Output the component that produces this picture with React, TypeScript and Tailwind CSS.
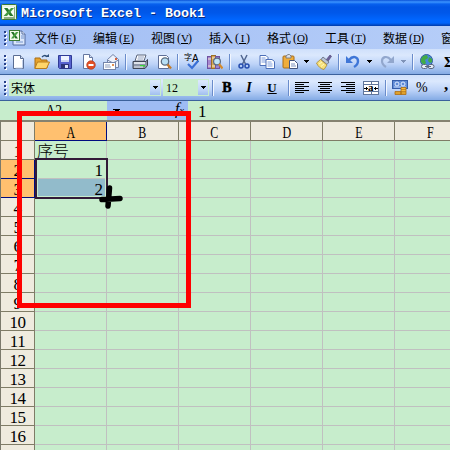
import type { ReactNode } from 'react';

const SONG = "font-['Noto_Sans_CJK_SC',sans-serif]";
const SERIF = "font-['Liberation_Serif','Noto_Sans_CJK_SC',serif]";

const MENUS = [
  { label: '文件', hotkey: 'F' },
  { label: '编辑', hotkey: 'E' },
  { label: '视图', hotkey: 'V' },
  { label: '插入', hotkey: 'I' },
  { label: '格式', hotkey: 'O' },
  { label: '工具', hotkey: 'T' },
  { label: '数据', hotkey: 'D' },
  { label: '窗', hotkey: '' },
];

const COLUMNS = ['A', 'B', 'C', 'D', 'E', 'F'];
const ROWS = Array.from({ length: 16 }, (_, i) => i + 1);

const CELLS: Record<string, string> = { A1: '序号', A2: '1', A3: '2' };

function Icon({ className = '', children }: { className?: string; children: ReactNode }) {
  return (
    <svg viewBox="0 0 16 16" className={`h-4 w-4 shrink-0 ${className}`} fill="none">
      {children}
    </svg>
  );
}

function Grip() {
  return (
    <div className="flex shrink-0 flex-col gap-[2px]">
      {[0, 1, 2, 3].map((n) => (
        <div key={n} className="h-[2px] w-[2px] bg-[#27418a] shadow-[1px_1px_0_#fff]" />
      ))}
    </div>
  );
}

function Separator({ className }: { className: string }) {
  return <div className={`h-4 w-[2px] shrink-0 border-r border-l border-r-[#f1f6ff] border-l-[#6a8ccb] ${className}`} />;
}

function Arrow({ className = '', color = '#000' }: { className?: string; color?: string }) {
  return (
    <svg viewBox="0 0 5 3" className={`h-[3px] w-[5px] shrink-0 ${className}`} shapeRendering="crispEdges">
      <path d="M0 0h5v1h-1v1h-1v1h-1v-1h-1v-1h-1z" fill={color} />
    </svg>
  );
}

function ExcelLogo() {
  return (
    <svg viewBox="0 0 16 16" className="h-4 w-4 shrink-0">
      <rect x="0.5" y="0.5" width="15" height="15" rx="1" fill="#e9f3df" stroke="#3c7a34" />
      <path d="M13 3v11H3" stroke="#8cae82" strokeWidth="2" fill="none" />
      <rect x="2" y="3" width="11" height="9.500" fill="#f8fff4" />
      <path d="M3 4h3.500l6 8H9z" fill="#2b7a2c" />
      <path d="M10 4h3l-7 8H2.500z" fill="#459b41" />
    </svg>
  );
}

function TitleBar() {
  return (
    <div className="flex h-[26px] shrink-0 items-center bg-[linear-gradient(#0a52d8_0px,#3b94ff_2px,#0861ee_4px,#0055e5_7px,#0058ea_13px,#0066ff_20px,#0064fb_23px,#0048c4_25px,#003aa8_26px)] pl-px">
      <div className="pb-[2px]">
        <ExcelLogo />
      </div>
      <span className="ml-[4px] pt-[2px] font-['Liberation_Mono',monospace] text-[13.33px] leading-[24px] font-bold whitespace-pre text-white [text-shadow:1px_1px_0_#0b2c80]">
        Microsoft Excel - Book1
      </span>
    </div>
  );
}

function MenuBar() {
  return (
    <div className="flex h-[23px] shrink-0 items-center bg-linear-to-r from-[#a2bef4] to-[#b5cdf8] pl-1">
      <Grip />
      <svg viewBox="0 0 18 17" className="ml-[2px] h-[17px] w-[18px] shrink-0">
        <path d="M5 2h9l3 3v11H5z" fill="#dbe7fb" stroke="#526a9e" />
        <path d="M14 2v3h3" fill="#fff" stroke="#526a9e" />
        <rect x="1.500" y="1.500" width="10" height="10" fill="#f2fbea" stroke="#3c7a34" />
        <path d="M3 3h2.500l4.500 6.500H7.500z" fill="#226f24" />
        <path d="M8 3h2.500l-5 6.500H3z" fill="#49a044" />
        <path d="M13 7h3M13 9h3M8 13h7" stroke="#7795cc" />
      </svg>
      <div className="ml-[9px] flex">
        {MENUS.map((menu) => (
          <div key={menu.label} className="flex w-[58px] shrink-0 items-center text-black">
            <span className={`${SONG} text-[12px] leading-[16px]`}>{menu.label}</span>
            {menu.hotkey && (
              <span className={`${SERIF} ml-[2px] flex text-[12px] leading-[16px]`}>
                <span className="w-[4px]">(</span>
                <span className="mt-[2px] h-[12px] w-[7px] border-b border-black text-center leading-[12px]">
                  <span className="inline-block text-[11px]">{menu.hotkey}</span>
                </span>
                <span>)</span>
              </span>
            )}
          </div>
        ))}
      </div>
    </div>
  );
}

function StandardToolbar() {
  return (
    <div className="flex h-[26px] shrink-0 items-center border-b border-[#3b619c] bg-[linear-gradient(#cfe0fb,#dbe8fd_25%,#bdd3f8_60%,#84abe5)] pl-1">
      <Grip />
      {/* Nuevo */}
      <Icon className="ml-1">
        <path d="M3.500 1.500h7l3 3v10h-10z" fill="#fff" stroke="#5a6d93" />
        <path d="M10.500 1.500v3h3" fill="#d5e0f4" stroke="#5a6d93" />
        <path d="M12.500 6v8h-7" stroke="#c4d2ec" />
      </Icon>
      {/* Abrir */}
      <Icon className="ml-2">
        <path d="M1 4h5l1 2h6v8H1z" fill="#e8a42c" stroke="#a86c14" />
        <path d="M3.500 8h12l-3 6.500H.8z" fill="#ffd569" stroke="#b87c1d" />
        <path d="M8 3c2-2 4-2 5 0" stroke="#30517c" strokeWidth="1.300" />
        <path d="M11 3h4v-3z" fill="#30517c" />
      </Icon>
      {/* Guardar */}
      <Icon className="ml-[7px]">
        <path d="M1.500 1.500h13v13h-12l-1-1z" fill="#5863cf" stroke="#303b96" />
        <rect x="4" y="2" width="8" height="6" fill="#eef3ff" />
        <path d="M4 7h8" stroke="#a6b6e6" />
        <rect x="4" y="10" width="8" height="4.500" fill="#2c3478" />
        <rect x="8" y="11" width="3" height="3" fill="#dfe6fb" />
      </Icon>
      {/* Permisos */}
      <Icon className="ml-[7px]">
        <path d="M3.500 .5h6l3 3v11h-9z" fill="#fff" stroke="#6577a0" />
        <path d="M9.500 .5v3h3" fill="#d5e0f4" stroke="#6577a0" />
        <circle cx="11" cy="11" r="4.300" fill="#e14f25" stroke="#a92c10" strokeWidth=".6" />
        <rect x="8.500" y="10" width="5" height="2" fill="#fff" />
      </Icon>
      {/* Correo */}
      <Icon className="ml-[7px]">
        <path d="M4.500 5.500l5.500-5 5.500 5v8h-11z" fill="#eef2fb" stroke="#7484aa" />
        <path d="M4.500 6l5.500 3 5.500-3" stroke="#7484aa" />
        <rect x="12" y="4" width="2" height="2" fill="#d36242" />
        <rect x=".5" y="8.500" width="12" height="7" fill="#fff" stroke="#7484aa" />
        <path d="M2 11h5M2 13h6" stroke="#8b9abb" />
        <rect x="9" y="10" width="2" height="2" fill="#e39154" />
      </Icon>
      <Separator className="ml-[6px]" />
      {/* Imprimir */}
      <Icon className="ml-[5px]">
        <path d="M5 1h9l-2 6H3z" fill="#fff" stroke="#59647c" />
        <path d="M6 3h6M5.500 5h6" stroke="#93a3c2" />
        <path d="M1 7.500h13l1.500-2v6l-2.500 3H1z" fill="#8d96a8" stroke="#3f4656" />
        <rect x="2" y="8" width="11" height="2" fill="#dde2ea" />
        <rect x="8" y="11" width="5" height="1.600" fill="#38d13c" />
        <path d="M2 13h9" stroke="#e9edf4" />
      </Icon>
      {/* Vista previa */}
      <Icon className="ml-2">
        <path d="M2.500 1.500h8l2 2v11h-10z" fill="#fff" stroke="#5f7098" />
        <circle cx="9" cy="7.500" r="3.700" fill="#b8e0f5" stroke="#5d6d80" strokeWidth="1.300" />
        <path d="M11.500 10.500l3.500 4" stroke="#c47c28" strokeWidth="2.400" />
      </Icon>
      <Separator className="ml-[5px]" />
      {/* Ortografía */}
      <div className="relative ml-[5px] h-4 w-4 shrink-0">
        <span className={`${SONG} absolute -top-[3px] left-0 text-[8px] leading-[11px] text-black`}>字</span>
        <span className="absolute -top-[1px] left-[8px] font-['Liberation_Sans',sans-serif] text-[10px] leading-[11px] text-black">A</span>
        <svg viewBox="0 0 16 16" className="absolute inset-0 h-4 w-4" fill="none">
          <path d="M4 10l4 4 6-7" stroke="#3a6fd6" strokeWidth="2.200" />
        </svg>
      </div>
      {/* Referencia */}
      <Icon className="ml-[7px]">
        <rect x=".5" y="2.500" width="4" height="12" fill="#a887cf" stroke="#7052a0" />
        <rect x="4.500" y="1.500" width="4" height="13" fill="#d7a855" stroke="#9b6e28" />
        <path d="M1 5h3M1 12h3M5 4h3M5 12h3" stroke="#f5eaca" />
        <rect x="8.500" y="2.500" width="4" height="12" fill="#9d86cd" stroke="#7052a0" />
        <circle cx="10" cy="7.500" r="3.400" fill="#c0e5f7" stroke="#596b83" strokeWidth="1.200" />
        <path d="M12 10l3.500 4.500" stroke="#d58a2b" strokeWidth="2.200" />
      </Icon>
      <Separator className="ml-[6px]" />
      {/* Cortar */}
      <Icon className="ml-[5px]">
        <path d="M5 1l4.500 9M11 1l-4.500 9" stroke="#526790" strokeWidth="1.500" />
        <circle cx="5" cy="12" r="2" stroke="#254cae" strokeWidth="1.500" />
        <circle cx="11" cy="12" r="2" stroke="#254cae" strokeWidth="1.500" />
      </Icon>
      {/* Copiar */}
      <Icon className="ml-[7px]">
        <path d="M1 1.500h6l2 2v8H1z" fill="#fff" stroke="#4c6fb8" />
        <path d="M2.500 4h4M2.500 6h5M2.500 8h5" stroke="#7c9ddd" />
        <path d="M7 5.500h6l2.500 2v7H7z" fill="#fff" stroke="#4c6fb8" />
        <path d="M8.500 8h4M8.500 10h5M8.500 12h5" stroke="#7c9ddd" />
      </Icon>
      {/* Pegar */}
      <Icon className="ml-[7px]">
        <rect x="1" y="2" width="11" height="12" rx="1" fill="#efad3c" stroke="#a86d19" />
        <path d="M4 4V2l2-1.500h1.500L9 2v2z" fill="#dbe0e8" stroke="#6b6f78" strokeWidth=".8" />
        <path d="M7.500 6.500h5l3 3v5h-8z" fill="#fff" stroke="#44557e" />
        <path d="M9 10h4M9 12h5" stroke="#7c91bd" />
      </Icon>
      <Arrow className="ml-[6px]" />
      {/* Copiar formato */}
      <Icon className="ml-[7px]">
        <path d="M10 6l4-5 1.500 1.300-3.500 5z" fill="#6e6298" stroke="#544a7c" strokeWidth=".7" />
        <path d="M7 3l6 5-2 2.500-6-5z" fill="#b9c4d5" stroke="#5e6679" strokeWidth=".8" />
        <path d="M4.500 5.500l6.500 5.500-3 4.500C5 15 2 12.500.5 9z" fill="#f6e07a" stroke="#a8862e" strokeWidth=".8" />
        <path d="M3 10l3-2M5 12.500L8 10" stroke="#fff6c0" />
      </Icon>
      <Separator className="ml-[6px]" />
      {/* Deshacer */}
      <Icon className="ml-[5px]">
        <path d="M4 6c4-5 9-3 9 1 0 3-1.500 4.500-4 6" stroke="#3f76d7" strokeWidth="2.400" />
        <path d="M1 2v7h7z" fill="#3f76d7" />
      </Icon>
      <Arrow className="ml-[6px]" />
      {/* Rehacer */}
      <Icon className="ml-[7px]">
        <path d="M12 6c-4-5-9-3-9 1 0 3 1.500 4.500 4 6" stroke="#92a7cd" strokeWidth="2.200" />
        <path d="M15 2v7H8z" fill="#92a7cd" />
      </Icon>
      <Arrow className="ml-[6px]" color="#7f93b8" />
      <Separator className="ml-[6px]" />
      {/* Hipervínculo */}
      <Icon className="ml-[5px]">
        <circle cx="7.500" cy="6.500" r="6" fill="#4589dc" stroke="#315c9e" />
        <path d="M4 2l4-1 1 3-3 2 1 3-2 2-3-3V5zM10 3l3 2v3l-2 1-2-2z" fill="#42ab45" />
        <rect x="2.500" y="10.500" width="6" height="4" rx="2" fill="#e5edf8" stroke="#5b6780" />
        <rect x="9" y="10.500" width="6" height="4" rx="2" fill="#e5edf8" stroke="#5b6780" />
        <path d="M6 12.500h6" stroke="#5b6780" />
      </Icon>
      <span className={`${SERIF} ml-[9px] text-[15px] leading-4 font-bold text-black`}>Σ</span>
    </div>
  );
}

function AlignIcon({ className, d }: { className: string; d: string }) {
  return (
    <svg viewBox="0 0 14 12" className={`h-[12px] w-[14px] shrink-0 ${className}`} shapeRendering="crispEdges">
      <path d={d} stroke="#000" fill="none" />
    </svg>
  );
}

function FormatToolbar() {
  return (
    <div className="flex h-[26px] shrink-0 items-center border-b border-[#3b619c] bg-[linear-gradient(#cfe0fb,#dbe8fd_25%,#bdd3f8_60%,#84abe5)] pl-1">
      <Grip />
      <div className="ml-[3px] flex h-[17px] w-[140px] shrink-0 items-center bg-[#c7edcc] pl-[2px]">
        <span className={`${SONG} text-[12px] leading-[16px] text-black`}>宋体</span>
      </div>
      <div className="flex h-[17px] w-[12px] shrink-0 items-center justify-center border border-[#c7edcc]">
        <Arrow />
      </div>
      <div className="ml-[2px] flex h-[17px] w-[34px] shrink-0 items-center bg-[#c7edcc] pl-[3px]">
        <span className={`${SERIF} text-[12px] leading-[16px] text-black`}>12</span>
      </div>
      <div className="flex h-[17px] w-[12px] shrink-0 items-center justify-center border border-[#c7edcc]">
        <Arrow />
      </div>
      <Separator className="ml-[3px]" />
      <span className={`${SERIF} ml-[8px] w-[10px] shrink-0 text-center text-[14px] leading-4 font-black text-black [-webkit-text-stroke:0.5px_#000]`}>B</span>
      <span className={`${SERIF} ml-[12px] w-[10px] shrink-0 text-center text-[14px] leading-4 font-bold text-black italic`}>I</span>
      <span className={`${SERIF} ml-[13px] w-[10px] shrink-0 text-center text-[13px] leading-4 font-bold text-black underline`}>U</span>
      <Separator className="ml-[11px]" />
      <AlignIcon className="ml-[5px]" d="M0 .5h14M0 2.500h9M0 4.500h14M0 6.500h9M0 8.500h14M0 10.500h9" />
      <AlignIcon className="ml-[9px]" d="M0 .5h14M2 2.500h10M0 4.500h14M2 6.500h10M0 8.500h14M2 10.500h10" />
      <AlignIcon className="ml-[9px]" d="M0 .5h14M5 2.500h9M0 4.500h14M5 6.500h9M0 8.500h14M5 10.500h9" />
      {/* Combinar y centrar */}
      <div className="relative ml-[8px] h-4 w-4 shrink-0">
        <svg viewBox="0 0 16 16" className="h-4 w-4" shapeRendering="crispEdges" fill="none">
          <rect x=".5" y="1.500" width="15" height="13" fill="#fff" stroke="#60769b" />
          <path d="M0 4.500h16M0 11.500h16M8.500 1v4M8.500 11v4" stroke="#60769b" />
          <path d="M1 8.500h4M11 8.500h4M3.500 7v3M12.500 7v3" stroke="#000" />
        </svg>
        <span className={`${SERIF} absolute top-[1px] left-[5px] text-[11px] leading-[12px] font-bold text-black`}>a</span>
      </div>
      <Separator className="ml-[6px]" />
      {/* Moneda */}
      <Icon className="ml-[5px]">
        <rect x=".5" y=".5" width="15" height="8" fill="#5f8ad6" stroke="#355ca9" />
        <circle cx="5" cy="4" r="2" stroke="#e0ebff" />
        <circle cx="11" cy="4" r="2" stroke="#e0ebff" />
        <path d="M2 7h12" stroke="#c5d7f8" />
        <path d="M9 7.500h5v7H9zM3 11.500h6v3H3z" fill="#f5b839" stroke="#a96b13" strokeWidth=".8" />
        <path d="M9 9.500h5M9 11.500h5M9 13h5M3 13h6" stroke="#a96b13" strokeWidth=".6" />
      </Icon>
      <span className={`${SERIF} ml-[8px] w-[13px] shrink-0 text-[14px] leading-4 text-black`}>%</span>
      <span className={`${SERIF} ml-[15px] shrink-0 pb-[5px] text-[17px] leading-4 font-bold text-black`}>,</span>
    </div>
  );
}

function FormulaBar() {
  return (
    <div className="flex h-[19px] shrink-0 bg-[#c7edcc] pl-px text-black">
      <div className={`${SERIF} h-[18px] w-[106px] shrink-0 text-center text-[16px] leading-[20px]`}>
        <span className="inline-block scale-x-[.85]">A2</span>
      </div>
      <div className="flex w-[81px] shrink-0 items-center justify-between bg-[#9ebcf4] pr-[4px] pl-[6px]">
        <Arrow className="mt-px h-[4px] w-[7px]" />
        <span className={`${SERIF} -mt-px text-[16px] leading-[18px] italic`}>
          f<span className="text-[10px]">x</span>
        </span>
      </div>
      <div className={`${SERIF} pl-[10px] text-[17px] leading-[21px]`}>1</div>
    </div>
  );
}

function Sheet() {
  return (
    <div className="relative flex h-[330px] flex-col border-t-2 border-l border-t-[#858270] border-l-[#7b7a6c] bg-[#c7edcc]">
      <div className="flex h-[19px] shrink-0">
        <div className="w-[34px] shrink-0 border-r border-b border-[#7f7c66] bg-[#efebde]" />
        {COLUMNS.map((col) => (
          <div
            key={col}
            className={`${SERIF} w-[72px] shrink-0 border-r border-b pt-[2px] text-center text-[16px] leading-[18px] text-black ${
              col === 'A' ? 'border-[#000c80] bg-[#ffc06f]' : 'border-[#7f7c66] bg-[#efebde]'
            }`}
          >
            <span className="inline-block scale-x-[.75]">{col}</span>
          </div>
        ))}
      </div>
      {ROWS.map((row) => {
        const selected = row === 2 || row === 3;
        return (
          <div key={row} className="flex h-[19px] shrink-0">
            <div
              className={`${SERIF} w-[34px] shrink-0 border-r border-b pt-[2px] text-center text-[17px] leading-[18px] tracking-[-0.5px] text-black ${
                selected ? 'border-[#000c80] bg-[#ffc06f]' : 'border-[#7f7c66] bg-[#efebde]'
              }`}
            >
              {row}
            </div>
            {COLUMNS.map((col) => (
              <div
                key={col}
                className={`w-[72px] shrink-0 border-r border-b border-[#c0c0c0] text-black ${
                  col === 'A' && row === 3 ? 'bg-[#92bbcb]' : ''
                }`}
              >
                {row === 1 ? (
                  <span className={`${SONG} block pl-[2px] text-[16px] leading-[19px] font-light whitespace-nowrap`}>{CELLS[`${col}${row}`]}</span>
                ) : (
                  <span className={`${SERIF} block pt-[2px] pr-[3px] text-right text-[17px] leading-[18px]`}>{CELLS[`${col}${row}`]}</span>
                )}
              </div>
            ))}
          </div>
        );
      })}
      <div className="flex h-[5px] shrink-0">
        <div className="w-[34px] shrink-0 border-r border-[#7f7c66] bg-[#efebde]" />
        {COLUMNS.map((col) => (
          <div key={col} className="w-[72px] shrink-0 border-r border-[#c0c0c0]" />
        ))}
      </div>

      {/* Borde de selección */}
      <div className="pointer-events-none absolute top-[36px] left-[34px] h-[41px] w-[73px] border-[2px] border-[#321a38]">
        <div className="h-full w-full border border-[#c7edcc]" />
      </div>
    </div>
  );
}

export default function App() {
  return (
    <div className="relative flex h-[450px] w-[450px] flex-col overflow-hidden bg-[#c7edcc]">
      <TitleBar />
      <MenuBar />
      <StandardToolbar />
      <FormatToolbar />
      <FormulaBar />
      <Sheet />

      {/* Marco rojo y cursor de relleno */}
      <div className="pointer-events-none absolute top-[111px] left-[17px] h-[197px] w-[174px] border-[5px] border-[#ff0000]" />
      <svg viewBox="0 0 24 24" className="absolute top-[185px] left-[99px] h-6 w-6" fill="none">
        <path d="M10.500 3l-1.500 18M3 14.500l18-1" stroke="#000" strokeWidth="5.500" strokeLinecap="round" />
      </svg>
    </div>
  );
}
